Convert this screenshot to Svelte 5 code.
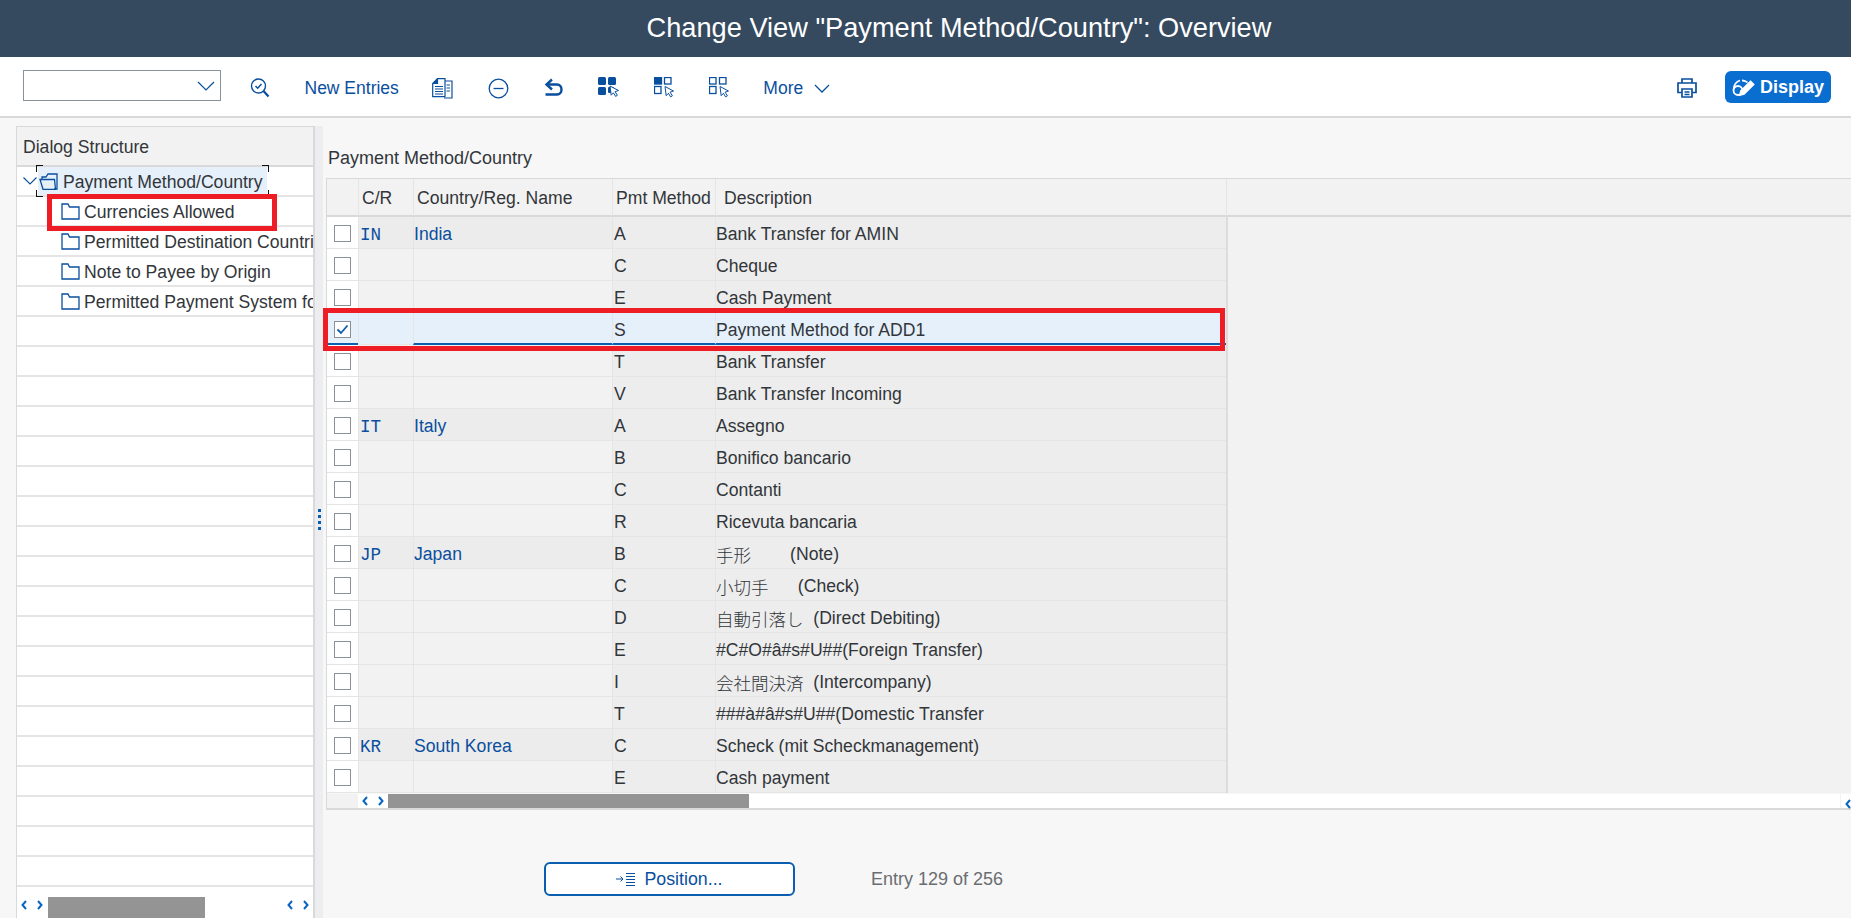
<script>
  const rows = [
    { cr: 'IN', name: 'India', pm: 'A', desc: 'Bank Transfer for AMIN' },
    { pm: 'C', desc: 'Cheque' },
    { pm: 'E', desc: 'Cash Payment' },
    { pm: 'S', desc: 'Payment Method for ADD1', selected: true },
    { pm: 'T', desc: 'Bank Transfer' },
    { pm: 'V', desc: 'Bank Transfer Incoming' },
    { cr: 'IT', name: 'Italy', pm: 'A', desc: 'Assegno' },
    { pm: 'B', desc: 'Bonifico bancario' },
    { pm: 'C', desc: 'Contanti' },
    { pm: 'R', desc: 'Ricevuta bancaria' },
    { cr: 'JP', name: 'Japan', pm: 'B', cjk: '手形', desc: '        (Note)' },
    { pm: 'C', cjk: '小切手', desc: '      (Check)' },
    { pm: 'D', cjk: '自動引落し', desc: '  (Direct Debiting)' },
    { pm: 'E', desc: '#C#O#â#s#U##(Foreign Transfer)' },
    { pm: 'I', cjk: '会社間決済', desc: '  (Intercompany)' },
    { pm: 'T', desc: '###à#â#s#U##(Domestic Transfer' },
    { cr: 'KR', name: 'South Korea', pm: 'C', desc: 'Scheck (mit Scheckmanagement)' },
    { pm: 'E', desc: 'Cash payment' }
  ];
  const treeItems = [
    'Currencies Allowed',
    'Permitted Destination Countries',
    'Note to Payee by Origin',
    'Permitted Payment System for Country'
  ];
  const emptyRows = Array(19);
</script>

{#snippet cursor(x, y)}
  <path d="M{x} {y}l8.5 4.5-3.4 1.2 2.3 3.6-1.8 1.1-2.2-3.6-2.2 2.4z" fill="#fff" stroke="#0a4f9e" stroke-width="1"/>
{/snippet}

{#snippet chevrons()}
  <svg class="chevs" width="22" height="12" viewBox="0 0 22 12">
    <path d="M5 2 1.5 6 5 10M17 2l3.500 4L17 10" fill="none" stroke="#0a64c4" stroke-width="2"/>
  </svg>
{/snippet}

<div class="page">
  <header class="title">Change View "Payment Method/Country": Overview</header>

  <div class="toolbar">
    <div class="select">
      <svg width="18" height="10" viewBox="0 0 18 10"><path d="M1 1l8 8 8-8" fill="none" stroke="#0a4f9e" stroke-width="1.200"/></svg>
    </div>
    <div class="tb first">
      <svg width="20" height="20" viewBox="0 0 20 20" fill="none" stroke="#0a4f9e">
        <circle cx="8.500" cy="8" r="7" stroke-width="1.400"/>
        <path d="M13.500 13l5 5.500" stroke-width="2.200"/>
        <path d="M5.500 8l2.200 2.200 3.800-4.200" stroke-width="1.500"/>
      </svg>
    </div>
    <span class="tb-text new">New Entries</span>
    <div class="tb">
      <svg width="21" height="21" viewBox="0 0 21 21" fill="none" stroke="#0a4f9e" stroke-width="1.200">
        <path d="M13 3h7v17h-8"/>
        <path d="M5.500 .7H13v18H.7V5.500z" fill="#fff"/>
        <path d="M5.500 .7v4.800H.7" fill="#0a4f9e"/>
        <path d="M3 8.500h8M3 11h8M3 13.500h8M3 16h8M14.500 7h3.500M14.500 10h3.500M14.500 13h3.500"/>
      </svg>
    </div>
    <div class="tb">
      <svg width="21" height="21" viewBox="0 0 21 21" fill="none" stroke="#0a4f9e" stroke-width="1.300">
        <circle cx="10.500" cy="10.500" r="9.300"/>
        <path d="M5.500 10.500h10"/>
      </svg>
    </div>
    <div class="tb">
      <svg width="20" height="20" viewBox="0 0 20 20" fill="none" stroke="#0a4f9e" stroke-width="2.400">
        <path d="M8 1.500 2.500 6.500 8 11.500"/>
        <path d="M3 6.500h10c6 0 6 10 0 10H1.500"/>
      </svg>
    </div>
    <div class="tb">
      <svg width="22" height="22" viewBox="0 0 22 22">
        <rect x="0" y="0" width="8" height="8" rx="1.500" fill="#0a4f9e"/>
        <rect x="10" y="0" width="8" height="8" rx="1.500" fill="#0a4f9e"/>
        <rect x="0" y="10" width="8" height="8" rx="1.500" fill="#0a4f9e"/>
        <rect x="10" y="10" width="6" height="6" rx="1" fill="#0a4f9e"/>
        {@render cursor(12, 9)}
      </svg>
    </div>
    <div class="tb">
      <svg width="22" height="22" viewBox="0 0 22 22" fill="none" stroke="#0a4f9e" stroke-width="1.300">
        <rect x=".5" y=".5" width="7" height="6.500" fill="#0a4f9e"/>
        <rect x="10.500" y=".5" width="6.500" height="6.500"/>
        <rect x=".5" y="9.500" width="6.500" height="7"/>
        {@render cursor(11, 9.500)}
      </svg>
    </div>
    <div class="tb">
      <svg width="22" height="22" viewBox="0 0 22 22" fill="none" stroke="#0a4f9e" stroke-width="1.300">
        <rect x=".5" y=".5" width="6.500" height="6.500"/>
        <rect x="10.500" y=".5" width="6.500" height="6.500"/>
        <rect x=".5" y="9.500" width="6.500" height="7"/>
        {@render cursor(11, 9.500)}
      </svg>
    </div>
    <span class="tb-text more">More</span>
    <svg class="more-chev" width="16" height="9" viewBox="0 0 16 9"><path d="M1 1l7 7 7-7" fill="none" stroke="#0a4f9e" stroke-width="1.300"/></svg>

    <div class="right">
      <svg width="20" height="20" viewBox="0 0 20 20" fill="none" stroke="#0a4f9e" stroke-width="1.700">
        <path d="M5 5V1h10v4"/>
        <path d="M4.500 14.500H1V5h18v9.500h-3.500"/>
        <path d="M5 11h10v8H5z"/>
        <path d="M7.500 14h5M7.500 16.500h5"/>
      </svg>
      <button class="display">
        <svg width="24" height="20" viewBox="0 0 24 20" fill="none" stroke="#fff" stroke-width="1.800">
          <circle cx="6" cy="12.500" r="4.500"/>
          <path d="M1.600 11.500C2 7 4 3.500 8 2.500"/>
          <path d="M10 2.500c3 0 4 1 5.500 2"/>
          <path d="M18.500 3.500l3 3-9.500 9.500-4 1 1-4z" fill="#fff"/>
        </svg>
        Display
      </button>
    </div>
  </div>

  <div class="body">
    <aside class="tree">
      <div class="tree-head">Dialog Structure</div>
      <div class="tree-row root">
        <svg class="tree-chev" width="14" height="8" viewBox="0 0 14 8"><path d="M.5.500 7 7 13.500.500" fill="none" stroke="#0a4f9e" stroke-width="1.100"/></svg>
        <span class="root-sel">
          <svg width="19" height="17" viewBox="0 0 19 17" fill="none" stroke="#0a4f9e" stroke-width="1.300">
            <path d="M3 6.500V4h4l2-3h9v15h-3"/>
            <path d="M1 6.500h14.500l1 9.800H4z"/>
          </svg>
          <span class="tree-text">Payment Method/Country</span>
          <i class="corner tl"></i><i class="corner tr"></i><i class="corner bl"></i><i class="corner br"></i>
        </span>
      </div>
      {#each treeItems as item, i}
        <div class="tree-row child">
          <svg width="19" height="17" viewBox="0 0 19 17" fill="none" stroke="#0a4f9e" stroke-width="1.300">
            <path d="M1 2.500V16h17V4H8.500L7 1H1z"/>
          </svg>
          <span class="tree-label tree-text">{item}</span>
          {#if i === 0}<div class="red red-tree"></div>{/if}
        </div>
      {/each}
      {#each emptyRows as _}
        <div class="tree-row"></div>
      {/each}
      <div class="tree-scroll">
        {@render chevrons()}
        <div class="tree-thumb"></div>
        {@render chevrons()}
      </div>
    </aside>

    <div class="sash">
      <i></i><i></i><i></i><i></i>
    </div>

    <main class="main">
      <h2>Payment Method/Country</h2>
      <div class="table">
        <div class="row head">
          <div class="c sel"></div>
          <div class="c">C/R</div>
          <div class="c">Country/Reg. Name</div>
          <div class="c">Pmt Method</div>
          <div class="c desc-head">Description</div>
          <div class="c rest"></div>
        </div>
        {#each rows as r}
          <div class="row" class:group={r.cr} class:selected={r.selected}>
            <div class="c sel">
              <span class="check">
                {#if r.selected}
                  <svg width="13" height="11" viewBox="0 0 13 11"><path d="M1.500 5.500 5 9l6.500-7.500" fill="none" stroke="#0a5eb0" stroke-width="1.800"/></svg>
                {/if}
              </span>
            </div>
            <div class="c key cr">{r.cr ?? ''}</div>
            <div class="c key name">{r.name ?? ''}</div>
            <div class="c val">{r.pm}</div>
            <div class="c val text">{#if r.cjk}<span class="cjk">{r.cjk}</span>{/if}{r.desc}</div>
            <div class="c rest"></div>
            {#if r.selected}<div class="red red-row"></div>{/if}
          </div>
        {/each}
        <div class="hscroll">
          <div class="hs-blank"></div>
          {@render chevrons()}
          <div class="hs-thumb"></div>
          <div class="hs-end">
            <svg width="6" height="12" viewBox="0 0 6 12"><path d="M5 2 1.500 6 5 10" fill="none" stroke="#0a64c4" stroke-width="2"/></svg>
          </div>
        </div>
      </div>
      <div class="footer">
        <button class="position">
          <svg width="20" height="14" viewBox="0 0 20 14" fill="none" stroke="#0a4f9e" stroke-width="1">
            <path d="M0 7h7M4.500 4.500 7 7l-2.500 2.500"/>
            <path d="M10 1.500h9M10 4.500h9M10 7.500h9M10 10.500h9M10 13.500h9"/>
          </svg>
          Position...
        </button>
        <span class="entry">Entry 129 of 256</span>
      </div>
    </main>
  </div>
</div>

<style>
  :global(body) { margin: 0; background: #f7f7f7; }
  .page {
    height: 918px;
    overflow: hidden;
    display: flex;
    flex-direction: column;
    font-family: "Liberation Sans", Arial, sans-serif;
    font-size: 17.6px;
    color: #32363a;
  }
  .title {
    height: 57px;
    flex: none;
    box-sizing: border-box;
    padding-left: 67px;
    background: #354a5f;
    color: #fff;
    font-size: 27.2px;
    line-height: 56px;
    text-align: center;
  }
  .toolbar {
    height: 56px;
    flex: none;
    background: #fff;
    border-bottom: 2px solid #d9d9d9;
    display: flex;
    align-items: center;
    padding: 3px 20px 0 23px;
  }
  .select {
    width: 198px;
    height: 31px;
    box-sizing: border-box;
    border: 1px solid #89919a;
    display: flex;
    align-items: center;
    justify-content: flex-end;
    padding-right: 5px;
    margin-top: -5px;
  }
  .tb { width: 55.5px; display: flex; justify-content: center; flex: none; }
  .tb.first { margin-left: 11px; }
  .tb-text { color: #0a4f9e; font-size: 17.5px; white-space: nowrap; }
  .new { margin: 0 16px 0 17px; }
  .more { margin-left: 15.5px; }
  .more-chev { margin-left: 11px; }
  .right { margin-left: auto; display: flex; align-items: center; gap: 28px; }
  .display {
    width: 106px;
    height: 32px;
    border: none;
    border-radius: 6px;
    background: #0a6ed1;
    color: #fff;
    font: bold 18px "Liberation Sans", Arial, sans-serif;
    display: flex;
    align-items: center;
    justify-content: center;
    gap: 4px;
    padding: 1px 0 0;
    margin-top: -2px;
  }
  .body { flex: 1; display: flex; padding: 8px 0 0 16px; min-height: 0; }
  .tree {
    width: 299px;
    flex: none;
    box-sizing: border-box;
    background: #fff;
    border: solid #d9d9d9;
    border-width: 1px 2px 0 1px;
  }
  .tree-head {
    height: 40px;
    box-sizing: border-box;
    background: #f2f2f2;
    border-bottom: 2px solid #d9d9d9;
    padding-left: 6px;
    line-height: 40px;
  }
  .tree-row {
    height: 30px;
    box-sizing: border-box;
    border-bottom: 2px solid #e5e5e5;
    display: flex;
    align-items: center;
    position: relative;
    white-space: nowrap;
  }
  .tree-text { padding-top: 2px; }
  .root { padding-left: 6px; }
  .tree-chev { margin-right: 1px; }
  .root-sel {
    position: relative;
    width: 229px;
    height: 28px;
    background: #e5f0fa;
    display: flex;
    align-items: center;
    gap: 5px;
    padding-left: 1px;
    box-sizing: border-box;
    white-space: nowrap;
  }
  .corner { position: absolute; width: 6px; height: 6px; border: solid #111; border-width: 0; }
  .tl { left: -2px; top: -2px; border-width: 1px 0 0 1px; }
  .tr { right: -2px; top: -2px; border-width: 1px 1px 0 0; }
  .bl { left: -2px; bottom: -2px; border-width: 0 0 1px 1px; }
  .br { right: -2px; bottom: -2px; border-width: 0 1px 1px 0; }
  .child { padding-left: 44px; gap: 4px; }
  .tree-label { overflow: hidden; width: 229px; flex: none; }
  .red { position: absolute; z-index: 2; box-sizing: border-box; border: 5px solid #ee1c25; pointer-events: none; }
  .red-tree { left: 30px; top: -3px; width: 230px; height: 37px; }
  .tree-scroll { height: 21px; margin-top: 10px; display: flex; align-items: flex-start; padding-left: 4px; }
  .chevs { margin-top: 2px; flex: none; }
  .tree-thumb { width: 157px; height: 21px; background: #949494; margin: 0 82px 0 5px; flex: none; }
  .sash {
    width: 8px;
    flex: none;
    background: #ecedef;
    display: flex;
    flex-direction: column;
    align-items: center;
    justify-content: center;
    gap: 3px;
    padding-bottom: 6px;
    box-sizing: border-box;
  }
  .sash i { width: 3px; height: 3px; background: #0a5eb0; }
  .main { flex: 1; min-width: 0; padding-left: 3px; }
  h2 {
    margin: 0;
    height: 52px;
    box-sizing: border-box;
    padding: 20px 0 0 2px;
    font-size: 18px;
    font-weight: normal;
    line-height: 24px;
  }
  .table { border: solid #d9d9d9; border-width: 1px 0 2px 1px; }
  .row {
    display: grid;
    grid-template-columns: 31px 55px 199px 103px 511px 1fr;
    height: 32px;
    box-sizing: border-box;
    position: relative;
  }
  .head { height: 38px; }
  .c {
    box-sizing: border-box;
    border-left: 1px solid #e5e5e5;
    border-bottom: 1px solid #e5e5e5;
    display: flex;
    align-items: center;
    white-space: pre;
    padding: 4px 0 0 1px;
    overflow: hidden;
    background: #f2f2f2;
  }
  .c:first-child { border-left: none; }
  .head .c { border-bottom: 2px solid #d9d9d9; padding: 3px 0 0 3px; background: #f2f2f2; }
  .head .desc-head { padding-left: 8px; }
  .rest { border-bottom: none !important; border-left: 2px solid #dcdcdc; padding: 0; }
  .head .rest { border-left: 1px solid #e5e5e5; border-bottom: 2px solid #d9d9d9 !important; }
  .sel { background: #fff; padding: 2px 0 0 7px; }
  .head .sel { background: #f2f2f2; }
  .check {
    width: 17px;
    height: 17px;
    box-sizing: border-box;
    background: #fff;
    border: 1px solid #89919a;
    display: flex;
    align-items: center;
    justify-content: center;
  }
  .key { color: #0a4f9e; }
  .cr { font-family: "Liberation Mono", monospace; }
  .name { padding-left: 0; }
  .val { background: #ededed; }
  .text { padding-left: 0; }
  .group .key { background: #ececec; }
  .cjk { font-family: "Noto Sans CJK JP", sans-serif; font-size: 17.5px; font-weight: 300; }
  .selected .c:not(.rest) { background: #e5f0fa; }
  .selected .c:not(.rest):not(.cr) { border-bottom: 2px solid #0a5eb0; }
  .red-row { left: -4px; top: -5px; width: 902px; height: 43px; }
  .hscroll { height: 14px; margin-top: 1px; display: flex; background: #fff; }
  .hs-blank { width: 31px; background: #f2f2f2; flex: none; }
  .hscroll .chevs { margin: 1px 4.5px 0 3.5px; }
  .hs-thumb { width: 361px; background: #949494; flex: none; }
  .hs-end {
    margin-left: auto;
    width: 6px;
    border-left: 1px solid #f2f2f2;
    padding-left: 4px;
  }
  .footer { display: flex; align-items: center; padding: 52px 0 0 218px; }
  .position {
    width: 251px;
    height: 34px;
    box-sizing: border-box;
    border: 2px solid #0a5eb0;
    border-radius: 6px;
    background: #fff;
    color: #0a4f9e;
    font: 17.8px "Liberation Sans", Arial, sans-serif;
    display: flex;
    align-items: center;
    justify-content: center;
    gap: 8px;
    padding: 0;
  }
  .entry { margin-left: 76px; color: #6a6d70; font-size: 18px; }
</style>
